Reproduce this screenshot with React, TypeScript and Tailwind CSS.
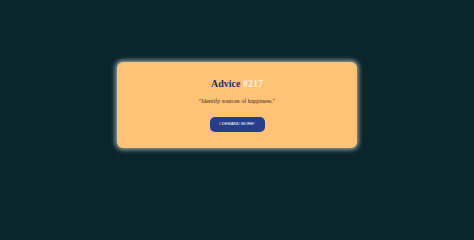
export default function App() {
  return (
    <div className="min-h-screen w-full bg-[#0a252b]">
      <div className="h-[209px] w-full flex items-center justify-center">
        <div className="w-[240px] h-[86px] rounded-[6px] bg-[#ffc377] shadow-[0_0_4px_2px_#8a9a9c] flex flex-col items-center pt-[16px]">
          <h1 className="text-[10px] leading-[12px] font-bold text-[#26335e] font-['Liberation_Serif',serif]">
            Advice <span className="text-[#fff3dc]">#217</span>
          </h1>
          <p className="mt-[7px] text-[6px] leading-[8px] text-[#3b2a1a] font-['Liberation_Serif',serif]">
            "Identify sources of happiness."
          </p>
          <button className="mt-[12px] w-[55px] h-[15px] rounded-[5px] bg-[#263e8a] text-white text-[4.2px] font-['Liberation_Sans',sans-serif] flex items-center justify-center">
            I DEMAND MORE!
          </button>
        </div>
      </div>
    </div>
  );
}
